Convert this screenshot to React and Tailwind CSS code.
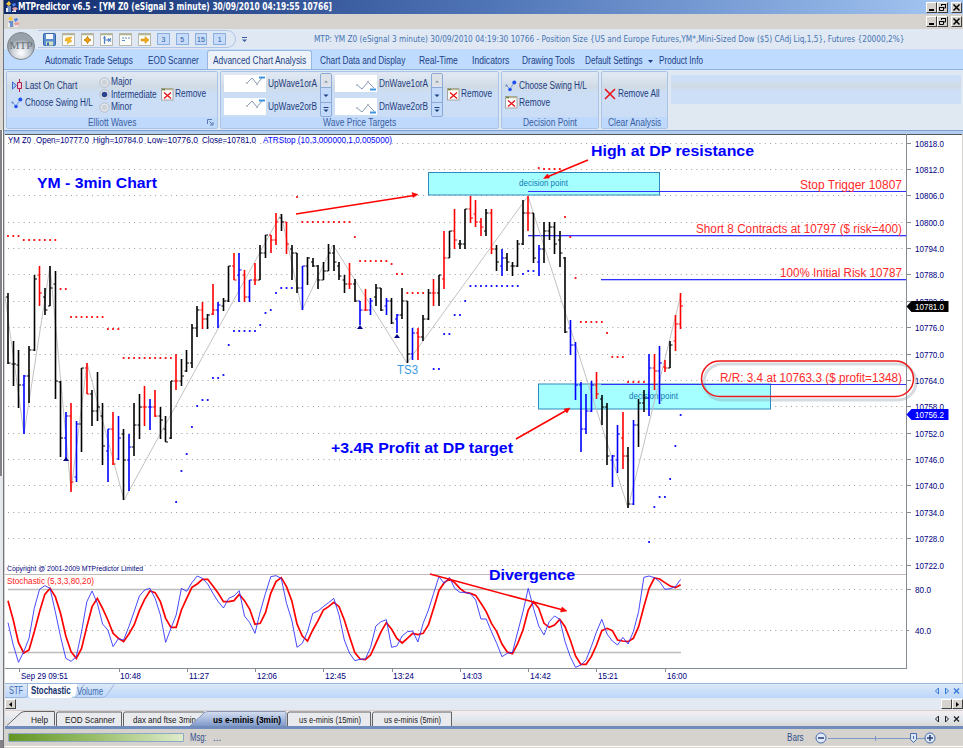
import { useLayoutEffect, useRef } from 'react';

const STEP = 5.255;
const barX = (i) => 8 + i * STEP;

// [high, low, open, close, color]
const BARS = [
  [293, 364, 297, 363, 'k'], [341, 386, 364, 364, 'k'], [350, 408, 365, 385, 'k'], [375, 434, 385, 376, 'b'],
  [346, 403, 376, 350, 'k'], [275, 351, 350, 279, 'k'], [266, 306, 275, 293, 'r'], [288, 315, 297, 310, 'k'],
  [266, 306, 306, 288, 'k'], [271, 399, 284, 381, 'k'], [381, 457, 382, 438, 'k'], [412, 460, 438, 416, 'b'],
  [403, 492, 416, 482, 'r'], [421, 482, 477, 424, 'b'], [368, 452, 424, 368, 'k'], [363, 394, 368, 394, 'r'],
  [390, 426, 394, 411, 'k'], [372, 421, 411, 407, 'k'], [403, 465, 416, 446, 'k'], [429, 482, 451, 429, 'b'],
  [412, 465, 429, 464, 'r'], [416, 460, 459, 438, 'b'], [429, 500, 434, 460, 'k'], [434, 491, 460, 447, 'b'],
  [403, 456, 447, 425, 'k'], [394, 439, 425, 407, 'k'], [386, 426, 407, 407, 'r'], [399, 430, 407, 407, 'b'],
  [390, 417, 407, 416, 'r'], [407, 439, 416, 420, 'k'], [416, 442, 429, 442, 'k'], [381, 439, 438, 381, 'k'],
  [354, 390, 381, 381, 'r'], [359, 386, 381, 376, 'k'], [350, 372, 371, 363, 'k'], [324, 368, 363, 328, 'k'],
  [306, 337, 328, 310, 'k'], [302, 329, 310, 319, 'r'], [314, 329, 319, 315, 'k'], [284, 315, 314, 310, 'r'],
  [302, 328, 310, 305, 'b'], [298, 311, 306, 301, 'k'], [266, 302, 301, 266, 'k'], [253, 280, 266, 280, 'r'],
  [253, 302, 275, 270, 'b'], [270, 302, 275, 297, 'r'], [280, 302, 297, 280, 'b'], [263, 285, 280, 280, 'r'],
  [245, 280, 280, 253, 'k'], [235, 258, 253, 235, 'k'], [235, 253, 235, 240, 'r'], [213, 245, 240, 222, 'r'],
  [214, 231, 218, 222, 'k'], [222, 254, 222, 244, 'r'], [245, 280, 249, 253, 'k'], [253, 293, 253, 288, 'k'],
  [266, 310, 288, 266, 'b'], [257, 285, 266, 258, 'k'], [258, 267, 262, 266, 'k'], [265, 289, 266, 280, 'k'],
  [262, 280, 280, 271, 'k'], [244, 271, 271, 253, 'k'], [245, 271, 253, 262, 'k'], [262, 280, 266, 276, 'k'],
  [275, 293, 280, 284, 'k'], [263, 289, 284, 284, 'r'], [279, 302, 284, 301, 'k'], [301, 325, 301, 310, 'b'],
  [289, 311, 310, 310, 'r'], [298, 315, 310, 301, 'b'], [284, 306, 297, 288, 'k'], [288, 311, 288, 310, 'k'],
  [298, 315, 306, 301, 'b'], [298, 324, 301, 323, 'k'], [314, 333, 319, 315, 'b'], [288, 319, 315, 301, 'k'],
  [301, 363, 301, 354, 'k'], [328, 360, 354, 333, 'b'], [328, 360, 333, 337, 'r'], [315, 341, 337, 319, 'k'],
  [289, 320, 319, 293, 'k'], [279, 306, 293, 293, 'r'], [275, 306, 293, 275, 'k'], [231, 289, 279, 258, 'r'],
  [231, 258, 258, 231, 'k'], [209, 249, 231, 240, 'r'], [240, 249, 244, 244, 'k'], [209, 249, 244, 209, 'k'],
  [196, 223, 209, 218, 'r'], [200, 227, 214, 222, 'r'], [218, 236, 222, 227, 'r'], [209, 236, 231, 213, 'k'],
  [209, 254, 213, 249, 'r'], [245, 271, 249, 262, 'k'], [249, 276, 266, 258, 'b'], [253, 271, 258, 262, 'k'],
  [262, 276, 266, 266, 'k'], [240, 267, 266, 244, 'k'], [200, 245, 244, 213, 'k'], [196, 231, 213, 213, 'r'],
  [213, 263, 213, 258, 'k'], [245, 276, 262, 249, 'b'], [222, 263, 249, 231, 'k'], [222, 240, 231, 227, 'k'],
  [222, 254, 227, 244, 'k'], [231, 267, 240, 253, 'k'], [257, 333, 258, 332, 'k'], [320, 355, 328, 345, 'b'],
  [342, 400, 345, 385, 'b'], [382, 452, 385, 429, 'b'], [394, 434, 429, 411, 'b'], [381, 412, 411, 385, 'b'],
  [372, 399, 385, 394, 'r'], [395, 425, 399, 407, 'k'], [403, 465, 407, 456, 'k'], [455, 487, 460, 456, 'b'],
  [425, 473, 460, 434, 'b'], [412, 469, 438, 456, 'r'], [447, 508, 456, 504, 'k'], [420, 505, 504, 425, 'b'],
  [399, 447, 425, 403, 'k'], [390, 412, 403, 398, 'k'], [354, 416, 398, 368, 'b'], [354, 390, 368, 371, 'r'],
  [346, 404, 371, 363, 'b'], [360, 372, 367, 368, 'r'], [341, 368, 368, 345, 'k'], [315, 351, 341, 324, 'r'],
  [293, 329, 324, 306, 'r'],
];

const BAR_COLORS = { k: '#000', b: '#0000ff', r: '#ff0000' };

// ATR stop runs: [first bar, last bar, y]
const STOPS_RED = [
  [0, 2, 236], [3, 9, 240], [10, 11, 289], [12, 18, 317], [19, 21, 329], [22, 31, 358], [55, 55, 197],
  [56, 65, 222], [66, 66, 237], [67, 72, 261], [73, 73, 264], [74, 75, 274], [76, 79, 293], [101, 101, 168],
  [102, 105, 169], [106, 106, 217], [107, 107, 237], [108, 108, 278], [109, 113, 322], [114, 114, 333],
  [115, 117, 357], [118, 121, 382],
];
const STOPS_BLUE = [
  [32, 32, 502], [33, 33, 471], [34, 34, 454], [35, 35, 427], [36, 36, 406], [37, 38, 400], [39, 40, 378],
  [41, 41, 375], [42, 42, 345], [43, 47, 331], [48, 48, 325], [49, 49, 313], [50, 50, 310], [51, 51, 293],
  [52, 54, 288], [81, 82, 369], [83, 84, 334], [85, 86, 315], [87, 87, 301], [88, 97, 286], [98, 98, 274],
  [99, 100, 271], [122, 122, 542], [123, 123, 507], [124, 125, 497], [126, 126, 479], [127, 127, 446],
  [128, 128, 415],
];

const ZIGZAG = '5,296 24,434 50,266 71,491 87,363 124,500 281,214 302,310 333,245 407,363 528,196 628,508 681,294';

// stochastic lines, a third of a pixel per unit below y = 560
const STOCH_K = [
  188, 255, 307, 275, 235, 145, 88, 77, 85, 155, 230, 295, 304, 290, 215, 125, 93, 130, 192, 210, 260, 236, 240,
  200, 155, 108, 90, 85, 115, 165, 247, 205, 165, 85, 94, 68, 48, 55, 72, 100, 125, 144, 115, 108, 92, 168, 188,
  220, 155, 100, 50, 47, 55, 130, 180, 262, 250, 215, 160, 153, 140, 128, 115, 165, 240, 280, 302, 298, 297, 262,
  198, 185, 179, 262, 258, 228, 215, 213, 246, 190, 150, 100, 50, 70, 52, 85, 97, 97, 101, 120, 177, 177, 215,
  250, 290, 280, 277, 215, 155, 85, 145, 198, 225, 185, 168, 178, 245, 290, 322, 315, 300, 260, 215, 178, 222,
  243, 255, 232, 252, 215, 155, 52, 48, 53, 65, 88, 86, 80, 58,
];
const STOCH_D = [
  122, 180, 248, 279, 270, 215, 155, 103, 85, 110, 160, 228, 275, 295, 265, 200, 140, 115, 145, 180, 220, 235,
  245, 222, 195, 152, 118, 93, 98, 125, 175, 202, 202, 150, 115, 82, 72, 58, 58, 78, 100, 125, 125, 122, 103, 122,
  148, 193, 190, 158, 100, 65, 53, 80, 122, 192, 228, 243, 210, 182, 150, 140, 127, 140, 180, 230, 278, 297, 299,
  285, 250, 215, 188, 208, 235, 249, 235, 220, 224, 220, 195, 145, 92, 68, 57, 68, 85, 97, 100, 106, 130, 155,
  190, 215, 252, 276, 281, 250, 210, 150, 125, 145, 190, 202, 195, 178, 200, 240, 288, 313, 313, 290, 255, 212,
  205, 212, 240, 243, 245, 235, 200, 140, 85, 54, 57, 68, 78, 83, 74,
];
const stochPoints = (data) => data.map((v, i) => `${barX(i)},${560 + v / 3}`).join(' ');

const PRICES = Array.from({ length: 17 }, (_, i) => ({ label: `${10818 - i * 6}.0`, y: 143.5 + i * 26.38 }));
const TIMES = [
  ['Sep 29 09:51', 21, 47, 19], ['10:48', 120, 21, 119], ['11:27', 189, 20, 187], ['12:06', 257, 20, 255],
  ['12:45', 325, 21, 323], ['13:24', 393, 21, 392], ['14:03', 462, 20, 460], ['14:42', 530, 21, 528],
  ['15:21', 598, 20, 596], ['16:00', 667, 20, 665],
];

// Text squeezed or stretched so that it takes exactly w pixels
function Fit({ w, className = '', children }) {
  const ref = useRef(null);
  useLayoutEffect(() => {
    const el = ref.current;
    el.style.transform = `scaleX(${w / el.offsetWidth})`;
  }, [w]);
  return (
    <span className={`inline-block shrink-0 ${className}`} style={{ width: w }}>
      <span ref={ref} className="inline-block origin-left whitespace-pre">
        {children}
      </span>
    </span>
  );
}

// The same for text inside a drawing
function Label({ w, children, ...rest }) {
  return (
    <text textLength={w} lengthAdjust="spacingAndGlyphs" {...rest}>
      {children}
    </text>
  );
}

function AppIcon() {
  return (
    <svg width="14" height="12" viewBox="0 0 14 12" className="shrink-0">
      <path d="M1 3 L4 0 L6 3 L4 5 Z" fill="#f8c838" />
      <path d="M2 5h4v6h-4z" fill="#6f8fc8" />
      <path d="M1 7h2v4h-2z" fill="#e8eef8" />
      <path d="M7 3l3-1 1 2-3 2z" fill="#4f7fe8" />
      <path d="M7 7l4-1 2 2-4 2z" fill="#e8a0a0" />
      <path d="M7 10l4-1v2h-4z" fill="#f0e8f0" />
    </svg>
  );
}

function WindowButtons() {
  const btn =
    'flex h-[11px] w-[11px] items-center justify-center border border-white border-r-[#404040] border-b-[#404040] bg-[#d6d3ce]';
  return (
    <div className="flex items-center pr-[1px]">
      <span className={btn}>
        <svg width="9" height="9" viewBox="0 0 9 9"><path d="M2 7h5" stroke="#000" strokeWidth="2" /></svg>
      </span>
      <span className={btn}>
        <svg width="9" height="9" viewBox="0 0 9 9" fill="none" stroke="#000">
          <path d="M3.500 3v-1.500h4v3.500h-1.500M3 1.500h5M1.500 4.500h4v3h-4zM1 4.500h5" />
        </svg>
      </span>
      <span className={`${btn} ml-[3px]`}>
        <svg width="9" height="9" viewBox="0 0 9 9"><path d="M1.500 1.500l6 6M7.500 1.500l-6 6" stroke="#000" strokeWidth="1.500" /></svg>
      </span>
    </div>
  );
}

function RemoveIcon() {
  return (
    <svg width="13" height="13" viewBox="0 0 13 13" className="shrink-0">
      <rect x=".5" y=".5" width="11.500" height="11.500" fill="#fff" stroke="#a8a4a0" />
      <path d="M1 1.500h11" stroke="#b4b890" strokeWidth="1.500" />
      <path d="M1 1.500h3" stroke="#6c8440" strokeWidth="1.500" />
      <path d="M3 4.500l7 6M10 4.500l-7 6" stroke="#e81010" strokeWidth="1.300" />
    </svg>
  );
}

function SwingIcon() {
  return (
    <svg width="12" height="12" viewBox="0 0 12 12" className="shrink-0">
      <path d="M1 5l4 4 4-6" fill="none" stroke="#7ea0d8" />
      <circle cx="1.500" cy="5.500" r="1" fill="#5878c8" />
      <circle cx="5" cy="9.500" r="1.800" fill="#2050f0" />
      <circle cx="9.300" cy="2.500" r="2" fill="#2050f0" />
    </svg>
  );
}

function WaveThumb({ down }) {
  return (
    <span className="flex h-[17px] w-[42px] justify-end bg-white">
      <svg width="24" height="17" viewBox="0 0 24 17" fill="none">
        {down ? (
          <>
            <path d="M4 10l5 4 6-7 6 6" stroke="#8496b0" />
            <path d="M17 14.500h6" stroke="#3c94e0" strokeWidth="2" />
            <circle cx="4" cy="10" r="1" fill="#b0b8c4" /><circle cx="15" cy="7" r="1.200" fill="#b0b8c4" />
          </>
        ) : (
          <>
            <path d="M5 8l5-5 5 6 5-6" stroke="#8496b0" />
            <path d="M17 2.500h6" stroke="#3c94e0" strokeWidth="2" />
            <circle cx="5" cy="8" r="1" fill="#b0b8c4" /><circle cx="15" cy="9" r="1.200" fill="#b0b8c4" />
          </>
        )}
      </svg>
    </span>
  );
}

function GallerySpinner() {
  return (
    <svg width="12" height="44" viewBox="0 0 12 44" className="shrink-0">
      <rect x=".5" y=".5" width="11" height="43" rx="1.500" fill="#c4dafa" stroke="#8aa9d6" />
      <rect x="1" y="1" width="10" height="13" fill="#dde2e8" />
      <path d="M1 14.500h10M1 29.500h10" stroke="#8aa9d6" />
      <path d="M4 9.500l2-2 2 2z" fill="#8c949c" />
      <path d="M3.500 21.500h5l-2.500 2.500zM3.500 36.500h5l-2.500 2.500z" fill="#1a3f80" />
      <path d="M3.500 34.500h5" stroke="#1a3f80" />
    </svg>
  );
}

function Radio({ on }) {
  return (
    <svg width="11" height="11" viewBox="0 0 11 11" className="shrink-0">
      <circle cx="5.500" cy="5.500" r="4.700" fill="#e4e8ec" stroke="#b0bac8" />
      <circle cx="5.500" cy="5.500" r="2.800" fill={on ? '#28448c' : '#ccd2d8'} />
    </svg>
  );
}

function QuickIcon({ kind }) {
  return (
    <svg width="13" height="13" viewBox="0 0 13 13" className="shrink-0">
      {kind === 'save' ? (
        <>
          <rect x=".5" y=".5" width="12" height="12" rx="1" fill="#5d8fd0" stroke="#3767a8" />
          <path d="M3 1h7v5h-7z" fill="#f4f8fc" /><path d="M3 8.500h7v4h-7z" fill="#d4e4c0" /><path d="M4 9.500h2v3h-2z" fill="#3767a8" />
        </>
      ) : (
        <>
          <rect x=".5" y=".5" width="12" height="12" fill="#fcfcf8" stroke="#b8b8b0" />
          <path d="M1 1.500h11" stroke="#b0b490" strokeWidth="1.500" />
        </>
      )}
      {kind === 'new' && <path d="M4 5l6-1-2 3 2 1-5 3 1-3-3 0z" fill="#f4bc24" stroke="#e09820" strokeWidth=".5" />}
      {kind === 'star' && <path d="M6.500 3.500l1.200 2.300 2.300 1.200-2.300 1.200-1.200 2.300-1.200-2.300-2.300-1.200 2.300-1.200z" fill="#f0a010" stroke="#c88008" />}
      {kind === 'tree' && <path d="M4.500 3v8M4.500 7h4M3 5h3M8 5.500l3 3M11 5.500l-3 3" fill="none" stroke="#4f80c4" strokeWidth="1.200" />}
      {kind === 'chart' && <path d="M3 5h2M6 4.500l2 1M9 5h2M3 7.500h3" stroke="#5e8cc8" />}
      {kind === 'go' && <path d="M3 6h4v-2.500l4 3.500-4 3.500v-2.500h-4z" fill="#f0a818" stroke="#c88c10" strokeWidth=".5" />}
    </svg>
  );
}

function QuickAccess() {
  return (
    <div className="ml-[34px] flex h-[18px] w-[198px] items-center gap-[6px] rounded-r-full border border-[#adc6e8] border-l-0 pl-[5px]">
      {['save', 'new', 'star', 'tree', 'chart', 'go'].map((k) => (
        <QuickIcon key={k} kind={k} />
      ))}
      {['3', '5', '15', '1'].map((n) => (
        <span key={n} className="flex h-[12px] w-[12.800px] shrink-0 items-center justify-center border border-[#8aaee0] bg-[#c6dcfa] text-[7px] text-[#2f5aa0]">
          {n}
        </span>
      ))}
    </div>
  );
}

const TABS = [
  ['Automatic Trade Setups', 88, 'ml-[41px]'],
  ['EOD Scanner', 51, 'ml-[15px]'],
  ['Advanced Chart Analysis', 93, 'ml-[8px]'],
  ['Chart Data and Display', 85, 'ml-[8px]'],
  ['Real-Time', 39, 'ml-[14px]'],
  ['Indicators', 37, 'ml-[14px]'],
  ['Drawing Tools', 53, 'ml-[13px]'],
  ['Default Settings', 58, 'ml-[10px]'],
  ['Product Info', 44, 'ml-[16px]'],
];

function RibbonTabs() {
  return (
    <div className="flex h-[19px] items-stretch bg-[#bfdbff] text-[10px] text-[#1c3f86]">
      {TABS.map(([name, w, gap], i) => (
        <div
          key={name}
          className={`flex items-center ${gap} ${
            i === 2 ? 'rounded-t-[3px] border border-b-0 border-[#96b6e4] bg-[#edf2f9] px-[5px] pt-[2px]' : 'pt-[3px]'
          }`}
        >
          <Fit w={w}>{name}</Fit>
          {name === 'Default Settings' && (
            <svg width="5" height="3" viewBox="0 0 5 3" className="-mr-[10px] ml-[5px]"><path d="M0 0h5l-2.500 3z" fill="#1c3f86" /></svg>
          )}
        </div>
      ))}
    </div>
  );
}

function Group({ title, titleWidth, className, children, launcher }) {
  return (
    <div className={`flex shrink-0 flex-col rounded-[2px] border border-[#a9c4e6] ${className}`}>
      <div className="flex h-[46px] bg-linear-to-b from-[#dfe8f2] from-[8%] via-[#d0dbe5] via-[32%] to-[#cbdef5] to-[48%]">{children}</div>
      <div className="flex h-[11px] items-center justify-center bg-[#bfd9fc] text-[#3a5ea2]">
        <Fit w={titleWidth}>{title}</Fit>
        {launcher && (
          <svg width="7" height="7" viewBox="0 0 7 7" className="-mr-[78px] ml-[71px]">
            <path d="M.5 5v-4.500h4.500M2.500 2.500l3 3M6 3v3h-3" fill="none" stroke="#5878b0" />
          </svg>
        )}
      </div>
    </div>
  );
}

function Ribbon() {
  return (
    <div className="flex h-[61px] gap-[2px] border-t border-[#8db2e3] bg-[#e0e8f2] px-[2px] pt-[1px] pb-px text-[10px] text-[#1d3c80]">
      <Group title="Elliott Waves" titleWidth={48} launcher className="w-[212px]">
        <div className="flex w-[92px] flex-col pt-[6px] pl-[4px]">
          <span className="flex h-[15px] items-center gap-[2px]">
            <svg width="12" height="13" viewBox="0 0 12 13">
              <path d="M1.500 3v7l4-3.500z" fill="#a8c8f8" stroke="#3868c8" />
              <path d="M8.500 0v13" stroke="#b02050" /><path d="M6.500 3.500h4v6h-4z" fill="#f0c8dc" stroke="#b02050" />
            </svg>
            <Fit w={52}>Last On Chart</Fit>
          </span>
          <span className="mt-[2px] flex h-[15px] items-center gap-[2px]">
            <SwingIcon />
            <Fit w={68}>Choose Swing H/L</Fit>
          </span>
        </div>
        <div className="flex w-[62px] flex-col pt-[4px]">
          <span className="flex h-[12.500px] items-center gap-[1px]"><Radio /><Fit w={21}>Major</Fit></span>
          <span className="flex h-[12.500px] items-center gap-[1px]"><Radio on /><Fit w={46}>Intermediate</Fit></span>
          <span className="flex h-[12.500px] items-center gap-[1px]"><Radio /><Fit w={21}>Minor</Fit></span>
        </div>
        <span className="flex h-[44px] items-center gap-[1px]"><RemoveIcon /><Fit w={31}>Remove</Fit></span>
      </Group>

      <Group title="Wave Price Targets" titleWidth={73} className="w-[279px]">
        <div className="flex flex-col gap-[6px] pt-[3px] pl-[3px]">
          <span className="flex items-center gap-[2px]"><WaveThumb /><Fit w={49}>UpWave1orA</Fit></span>
          <span className="flex items-center gap-[2px]"><WaveThumb /><Fit w={49}>UpWave2orB</Fit></span>
        </div>
        <div className="ml-[3px] pt-[1px]"><GallerySpinner /></div>
        <div className="ml-[3px] flex flex-col gap-[6px] pt-[3px]">
          <span className="flex items-center gap-[2px]"><WaveThumb down /><Fit w={49}>DnWave1orA</Fit></span>
          <span className="flex items-center gap-[2px]"><WaveThumb down /><Fit w={49}>DnWave2orB</Fit></span>
        </div>
        <div className="ml-[3px] pt-[1px]"><GallerySpinner /></div>
        <span className="ml-[4px] flex h-[44px] items-center gap-[1px]"><RemoveIcon /><Fit w={31}>Remove</Fit></span>
      </Group>

      <Group title="Decision Point" titleWidth={54} className="w-[98px]">
        <div className="flex flex-col pt-[6px] pl-[3px]">
          <span className="flex h-[15px] items-center gap-[2px]"><SwingIcon /><Fit w={68}>Choose Swing H/L</Fit></span>
          <span className="mt-[2px] flex h-[15px] items-center gap-[1px]"><RemoveIcon /><Fit w={31}>Remove</Fit></span>
        </div>
      </Group>

      <Group title="Clear Analysis" titleWidth={53} className="w-[67px]">
        <span className="flex h-[44px] items-center gap-[2px] pl-[2px]">
          <svg width="12" height="12" viewBox="0 0 12 12"><path d="M1 1l10 10M11 1l-10 10" stroke="#e81010" strokeWidth="1.500" /></svg>
          <Fit w={42}>Remove All</Fit>
        </span>
      </Group>

      <div className="mt-[4px] ml-[1px] h-[29px] grow bg-linear-to-b from-[#cddff6] from-[20%] via-[#d0d9e1] via-[38%] to-[#cddff6] to-[55%]" />
    </div>
  );
}

function PriceChart() {
  return (
    <svg width="957" height="549" viewBox="5 134 957 549" className="block bg-white font-['Liberation_Sans']" fontSize="9">
      <path d="M5 134.500h957" stroke="#505860" />

      {/* dotted grid */}
      {PRICES.map((p) => (
        <path key={p.label} d={`M8 ${Math.round(p.y) - 0.5}H905`} stroke="#9c9c9c" strokeDasharray="1 4.255" />
      ))}
      <path d="M8 589.500H905M8 630.500H905" stroke="#9c9c9c" strokeDasharray="1 4.255" />

      {/* decision point zones */}
      <rect x="428.500" y="172.500" width="231" height="22.500" fill="#a6ffff" stroke="#2f8ac0" />
      <rect x="538.500" y="384" width="232" height="25" fill="#a6ffff" stroke="#2f8ac0" />
      <g fill="#1078b8">
        <Label x="519" y="186" w="49">decision point</Label>
        <Label x="629" y="399" w="49">decision point</Label>
      </g>
      <g fill="#3030ff">
        <rect x="528" y="191" width="378" height="1" />
        <rect x="528" y="235" width="378" height="1.300" />
        <rect x="601" y="279" width="305" height="1.300" />
        <rect x="601" y="384" width="305" height="1" />
      </g>

      <polyline points={ZIGZAG} fill="none" stroke="#c2c2c2" />

      {/* price bars */}
      {BARS.map(([hi, lo, open, close, c], i) => {
        const x = Math.round(barX(i) * 2) / 2;
        return (
          <g key={i} stroke={BAR_COLORS[c]}>
            <path d={`M${x} ${hi}V${lo}`} strokeWidth="1.600" />
            <path d={`M${x - 2} ${open}H${x}M${x} ${close}H${x + 2.5}`} />
          </g>
        );
      })}

      {[[STOPS_RED, '#ff0000'], [STOPS_BLUE, '#0000ff']].map(([runs, color]) =>
        runs.map(([from, to, y]) =>
          Array.from({ length: to - from + 1 }, (_, n) => (
            <rect key={`${from}-${n}`} x={barX(from + n) - 0.9} y={y - 0.9} width="1.800" height="1.800" fill={color} />
          ))
        )
      )}
      <path d="M63 461l3-4 3 4zM357 329l3-4 3 4zM394 338l3-4 3 4z" fill="#000080" />

      {/* axes */}
      <path d="M906.500 134V668.500" stroke="#848c94" />
      <path d="M5 574.500H906" stroke="#c4bcb8" />
      <path d="M5 668.500H907" stroke="#848c94" />
      <path d="M8 589.500H681M8 652.500H681" stroke="#bcbcbc" strokeWidth="1.400" />
      <g fill="#000080">
        {PRICES.map((p) => (
          <g key={p.label}>
            <path d={`M907 ${Math.round(p.y) - 0.5}h4`} stroke="#848c94" />
            <Label x="915" y={p.y + 3} w="29">{p.label}</Label>
          </g>
        ))}
        <path d="M907 589.500h4M907 630.500h2" stroke="#848c94" />
        <Label x="915" y="592.500" w="16">80.0</Label>
        <Label x="915" y="633.500" w="16">40.0</Label>
        {TIMES.map(([label, x, w, tick]) => (
          <g key={label}>
            <path d={`M${tick + 0.5} 669v3`} stroke="#848c94" />
            <Label x={x} y="679" w={w}>{label}</Label>
          </g>
        ))}
      </g>
      <path d="M906.500 306.500l5-5.500h37v11h-37z" fill="#000" />
      <path d="M906.500 414.500l5-5.500h37v11h-37z" fill="#0000ff" />
      <g fill="#fff">
        <Label x="915" y="309.800" w="29">10781.0</Label>
        <Label x="915" y="418" w="29">10756.2</Label>
      </g>

      {/* stochastic */}
      <polyline points={stochPoints(STOCH_D)} fill="none" stroke="#ff0000" strokeWidth="1.700" />
      <polyline points={stochPoints(STOCH_K)} fill="none" stroke="#3434ff" strokeWidth=".9" />

      <g fill="#000080" fontSize="8.500">
        <Label x="8" y="142.500" w="23">YM Z0</Label>
        <Label x="36" y="142.500" w="53">Open=10777.0</Label>
        <Label x="93" y="142.500" w="50">High=10784.0</Label>
        <Label x="147" y="142.500" w="51">Low=10776.0</Label>
        <Label x="202" y="142.500" w="54">Close=10781.0</Label>
      </g>
      <Label x="263" y="142.500" w="129" fontSize="8.500" fill="#0000ff">ATRStop (10,3.000000,1,0.005000)</Label>
      <Label x="7" y="570.500" w="136" fontSize="7.800" fill="#000080">Copyright @ 2001-2009 MTPredictor Limited</Label>
      <Label x="7" y="583.500" w="87" fill="#ff2020">Stochastic (5,3,3,80,20)</Label>
      <Label x="397" y="374" w="21" fontSize="12" fill="#3c9ce0">TS3</Label>

      {/* trade levels */}
      <g fill="#ff2a2a" fontSize="12.500">
        <Label x="800" y="189" w="102">Stop Trigger 10807</Label>
        <Label x="696" y="233.300" w="206">Short 8 Contracts at 10797 ($ risk=400)</Label>
        <Label x="780" y="277.300" w="122">100% Initial Risk 10787</Label>
        <Label x="720" y="382" w="182">R/R: 3.4 at 10763.3 ($ profit=1348)</Label>
      </g>
      <rect x="704" y="364" width="212" height="36" rx="18" fill="none" stroke="#788898" strokeOpacity=".3" strokeWidth="3" />
      <rect x="701.500" y="361" width="212" height="35.500" rx="18" fill="none" stroke="#f01818" strokeWidth="1.500" />

      {/* annotations */}
      <g fill="#0000ff" fontSize="15" fontWeight="bold">
        <Label x="37" y="187.500" w="120">YM - 3min Chart</Label>
        <Label x="591" y="156" w="163">High at DP resistance</Label>
        <Label x="331" y="452.500" w="182">+3.4R Profit at DP target</Label>
        <Label x="489" y="579.500" w="86">Divergence</Label>
      </g>
      <g stroke="#ff0000" strokeWidth="1.500" fill="#ff0000">
        <path d="M296 214L414 195.500M588 160L547 177M516 439L567 410M430 574L563 610" />
        <path d="M418 194.500l-6-2 1 5zM543.500 178.500l4-4.500 2 4zM570 408l-6 1 3 4zM567 611l-5-4-1.500 5z" strokeWidth=".5" />
      </g>
    </svg>
  );
}

function PagerArrows({ className }) {
  return (
    <svg width="28" height="10" viewBox="0 0 28 10" fill="none" className={`stroke-current ${className}`}>
      <path d="M4.500 2v6l-3-3zM11.500 2v6l3-3z" />
      <path d="M20 2.500l5 5M25 2.500l-5 5" strokeWidth="1.300" />
    </svg>
  );
}

function IndicatorTabs() {
  return (
    <div className="flex h-[15px] border-t border-[#9ab8dc] bg-linear-to-b from-[#dce8f6] to-[#bbd6fc] text-[10px] text-[#3d6cb0]">
      <span className="flex w-[23px] items-center justify-center rounded-br-[4px] border-r border-b border-[#9cb8dc]"><Fit w={14}>STF</Fit></span>
      <span className="flex w-[45px] items-center justify-center rounded-b-[4px] bg-white font-bold text-[#14306c]"><Fit w={40}>Stochastic</Fit></span>
      <svg width="43" height="14" viewBox="0 0 43 14">
        <path d="M0 13.500h1q3 0 5-4l5-9M0 13.500h29q4 0 6-4l6-9" fill="none" stroke="#9cb8dc" />
        <path d="M0 0h4l-1 9q-1 4-3 4z" fill="#fff" />
        <Label x="4" y="10.500" w="26" fontSize="10" fill="#3d6cb0">Volume</Label>
      </svg>
      <PagerArrows className="mt-[2px] mr-[1px] ml-auto text-[#3478d8]" />
    </div>
  );
}

function ScrollRow() {
  const btn = 'flex h-[10px] w-[11px] items-center justify-center border border-white border-r-[#404040] border-b-[#404040] bg-[#d6d3ce]';
  return (
    <div className="flex h-[12px] items-center justify-between bg-[#e2e9f3]">
      <span className={btn}>
        <svg width="3" height="5" viewBox="0 0 3 5"><path d="M3 0v5l-3-2.500z" /></svg>
      </span>
      <span className="flex">
        <span className={btn} />
        <span className={btn}>
          <svg width="3" height="5" viewBox="0 0 3 5"><path d="M0 0v5l3-2.500z" /></svg>
        </span>
      </span>
    </div>
  );
}

// [label, x, text width]
const PAGES = [
  ['Help', 31, 17], ['EOD Scanner', 65, 50], ['dax and ftse 3min', 133, 63], ['us e-minis (15min)', 299, 62], ['us e-minis (5min)', 384, 57],
];

function PageTabs() {
  return (
    <div className="flex h-[16px] border-t border-[#d8d0d0] bg-linear-to-b from-[#f4eeee] via-[#e2e8f0] to-[#dcd8d4]">
      <svg width="450" height="15" viewBox="5 711 450 15" fontSize="9.500">
        <defs>
          <linearGradient id="activePage" x2="0" y2="1">
            <stop offset="0" stopColor="#d6dff0" />
            <stop offset="1" stopColor="#7f9acb" />
          </linearGradient>
        </defs>
        <path d="M5 726l13-13q2-2 5-2h182v15z" fill="#e8eaee" />
        <path d="M7 725.500l13-12q2-2 5-2H54.500v14M56.500 726v-12q0-2 2-2H121.500v14M123.500 726v-12q0-2 2-2H204" fill="none" stroke="#646464" />
        <path d="M287.500 726v-12q0-2 2-2H370.500v14M372.500 726v-12q0-2 2-2H451.500v14" fill="#e8eaee" stroke="#646464" />
        {PAGES.map(([label, x, w]) => (
          <Label key={label} x={x} y="723" w={w} fill="#202020">{label}</Label>
        ))}
        <path d="M190 726l13-12q2-2.500 5-2.500H285q1 0 1 1.500v13z" fill="url(#activePage)" stroke="#8898b8" />
        <Label x="213" y="723" w="68" fontWeight="bold">us e-minis (3min)</Label>
      </svg>
      <PagerArrows className="mt-[3px] mr-[1px] ml-auto text-[#202020]" />
    </div>
  );
}

function StatusBar() {
  return (
    <div className="flex h-[21px] items-center border-t-[3px] border-b border-t-[#6f8cbc] border-b-white bg-[#d6d3ce] text-[10px] text-[#2f4f8c]">
      <span className="ml-[3px] h-[9px] w-[176px] rounded-[1px] border border-[#8fa8c4] bg-linear-to-r from-[#63951f] via-[#9abf6a] to-[#dfeccb]" />
      <Fit w={17} className="ml-[6px]">Msg:</Fit>
      <span className="ml-[6px]">...</span>
      <Fit w={17} className="ml-auto">Bars</Fit>
      <svg width="125" height="14" viewBox="0 0 125 14" className="mr-[25px] ml-[9px]" fill="none" stroke="#4a6fae">
        <circle cx="8" cy="7" r="5" fill="#e0eafa" />
        <path d="M5 7h6" stroke="#243c70" strokeWidth="1.500" />
        <path d="M15 7.500h97M62.500 5v5" stroke="#7c98c4" />
        <path d="M97.500 2.500h6v6l-3 3-3-3zM100.500 5v3" fill="#dbe6f6" />
        <circle cx="117" cy="7" r="5" fill="#e0eafa" />
        <path d="M114 7h6M117 4v6" stroke="#243c70" strokeWidth="1.500" />
      </svg>
    </div>
  );
}

export default function App() {
  return (
    <div className="flex h-[748px] w-[963px] overflow-hidden bg-[#d6d3ce] font-['Liberation_Sans',sans-serif] leading-none">
      {/* sliver of the window behind */}
      <div className="flex w-[4px] shrink-0 flex-col border-r border-[#70747c]">
        <div className="h-[130px] bg-[#dcd9d4]" />
        <div className="h-[346px] border-r border-white bg-[#848284]" />
        <div className="h-[264px] bg-[#e6e8ec]" />
        <div className="h-[8px] bg-[#848284]" />
      </div>

      <div className="relative flex w-[959px] flex-col">
        <div className="flex h-[14px] items-center bg-linear-to-r from-[#102a6c] via-[#4f74b6] to-[#a6c8f4] pl-[1px]">
          <AppIcon />
          <Fit w={314} className="ml-[-1px] font-['DejaVu_Sans_Condensed','DejaVu_Sans'] text-[10px] font-bold text-white">
            MTPredictor v6.5 - [YM Z0 (eSignal 3 minute) 30/09/2010 04:19:55 10766]
          </Fit>
          <div className="ml-auto"><WindowButtons /></div>
        </div>
        <div className="flex h-[15px] items-center justify-between pl-[3px]">
          <AppIcon />
          <WindowButtons />
        </div>

        <div className="flex h-[21px] items-center border-b border-[#c8dcf6] bg-[#e0e8f3]">
          <QuickAccess />
          <svg width="7" height="7" viewBox="0 0 7 7" className="ml-[5px]">
            <path d="M1 1.500h5" stroke="#3860a0" /><path d="M1 3.500h5l-2.500 2.500z" fill="#3860a0" />
          </svg>
          <Fit w={590} className="ml-[66px] font-['DejaVu_Sans_Condensed','DejaVu_Sans'] text-[9px] text-[#4474b4]">
            {'MTP: YM Z0 (eSignal 3 minute) 30/09/2010 04:19:30 10766 - Position Size {US and Europe Futures,YM*,Mini-Sized Dow ($5) CAdj Liq,1,5}, Futures {20000,2%}'}
          </Fit>
        </div>
        <RibbonTabs />
        <Ribbon />
        <div className="h-[4px] border-t border-[#7ba0d4] bg-[#b4cdec]" />

        {/* round application button hangs over the toolbar and the tab row */}
        <svg width="30" height="30" viewBox="0 0 30 30" className="absolute top-[31px] left-[2px]">
          <defs>
            <radialGradient id="orb" cy=".75">
              <stop offset="0" stopColor="#fff" />
              <stop offset=".6" stopColor="#cfd5dc" />
              <stop offset="1" stopColor="#98a0aa" />
            </radialGradient>
          </defs>
          <circle cx="15" cy="15" r="13.500" fill="url(#orb)" stroke="#808890" />
          <Label x="3.500" y="18" w="23" fontSize="11" fontFamily="Liberation Serif" fill="#687078">MTP</Label>
        </svg>

        <div className="flex grow flex-col pl-px">
          <PriceChart />
          <IndicatorTabs />
          <ScrollRow />
          <PageTabs />
          <StatusBar />
        </div>
      </div>
    </div>
  );
}
